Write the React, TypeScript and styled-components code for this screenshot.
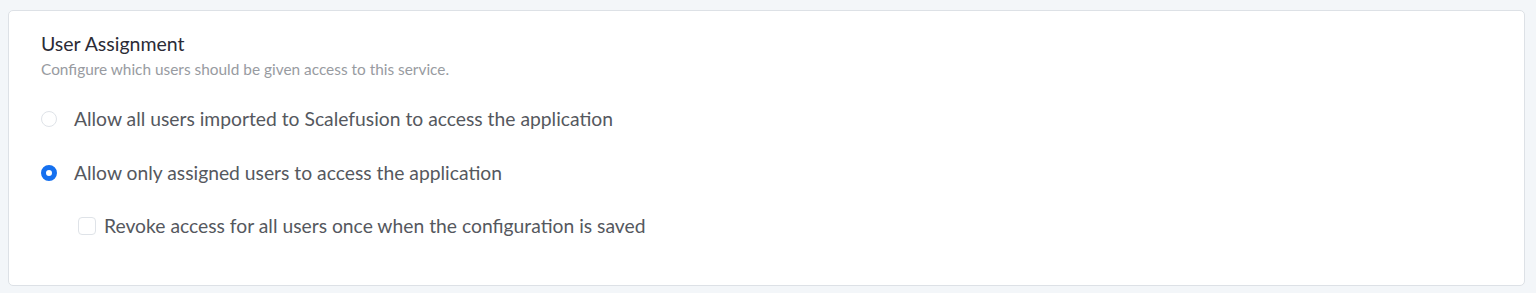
import React, { useState } from 'react';
import styled, { createGlobalStyle } from 'styled-components';

const GlobalStyle = createGlobalStyle`
    body{
        margin: 0;
        background-color: #f3f6f9;
        font-family: Lato, "Noto Sans", sans-serif;
    }
`

type Choice = 'all' | 'assigned';

export default function App(){
    const [choice, setChoice] = useState<Choice>('assigned');
    const [revoke, setRevoke] = useState(false);

    return(
        <>
            <GlobalStyle/>
            <Page>
                <Card>
                    <Title>User Assignment</Title>
                    <Subtitle>Configure which users should be given access to this service.</Subtitle>
                    <Options>
                        <Option onClick={()=> setChoice('all')}>
                            <Radio $checked={choice === 'all'}/>
                            <span>Allow all users imported to Scalefusion to access the application</span>
                        </Option>
                        <Option onClick={()=> setChoice('assigned')}>
                            <Radio $checked={choice === 'assigned'}/>
                            <span>Allow only assigned users to access the application</span>
                        </Option>
                        <SubOption onClick={()=> setRevoke(!revoke)}>
                            <Checkbox $checked={revoke}/>
                            <span>Revoke access for all users once when the configuration is saved</span>
                        </SubOption>
                    </Options>
                </Card>
            </Page>
        </>
    )
}

const Page = styled.div`
    padding: 10px 11px 7px 8px;
    min-height: 293px;
    box-sizing: border-box;
`

const Card = styled.div`
    background-color: #ffffff;
    border: 1px solid #dde1e6;
    border-radius: 5px;
    height: 276px;
    box-sizing: border-box;
    padding: 21px 32px 0 32px;
`

const Title = styled.h1`
    margin: 0;
    font-size: 19.5px;
    font-weight: 400;
    line-height: 24px;
    color: #2b2b36;
`

const Subtitle = styled.p`
    margin: 3px 0 0 0;
    font-size: 15.4px;
    line-height: 20px;
    color: #989ba1;
`

const Options = styled.div`
    display: flex;
    flex-direction: column;
    gap: 30px;
    margin-top: 28px;
`

const Option = styled.label`
    display: flex;
    align-items: center;
    gap: 17px;
    height: 24px;
    font-size: 19.3px;
    line-height: 24px;
    color: #55585e;
    cursor: pointer;
    span:last-child{
        margin-top: -1px;
    }
`

const SubOption = styled(Option)`
    margin-top: -1px;
    padding-left: 37px;
    gap: 8px;
`

const Radio = styled.span<{$checked: boolean}>`
    width: 16px;
    height: 16px;
    border-radius: 50%;
    box-sizing: border-box;
    flex-shrink: 0;
    background-color: #ffffff;
    border: ${p => p.$checked ? '5px solid #1570ef' : '1px solid #dfe3e8'};
`

const Checkbox = styled.span<{$checked: boolean}>`
    width: 18px;
    height: 18px;
    border-radius: 4px;
    box-sizing: border-box;
    flex-shrink: 0;
    border: 1px solid #dfe3e8;
    background-color: ${p => p.$checked ? '#1570ef' : '#ffffff'};
`
